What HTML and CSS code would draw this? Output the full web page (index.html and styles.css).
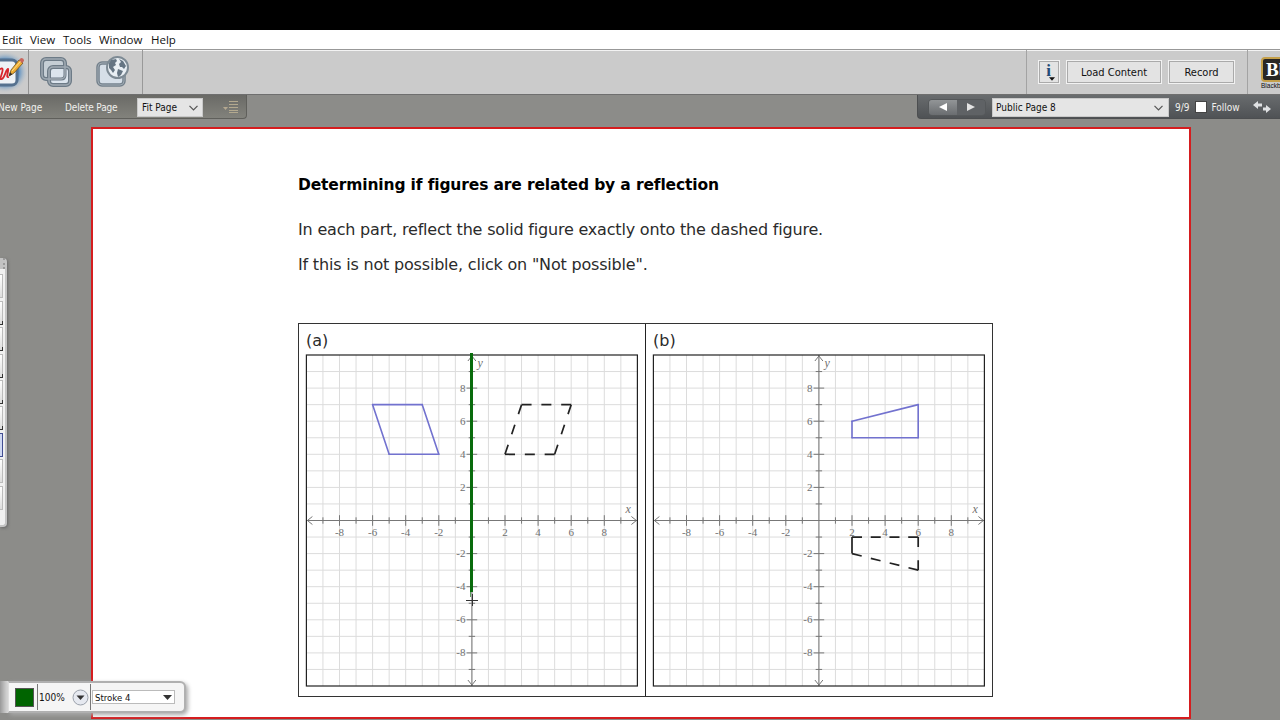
FILE: index.html
```
<!DOCTYPE html>
<html>
	<head>
		<meta charset="UTF-8">
		<title>Whiteboard</title>
		<link rel="stylesheet" href="styles.css">
	</head>
	<body>
		<div class="titlebar"></div>
		<ul class="menu">
			<li class="m1">Edit</li>
			<li class="m2">View</li>
			<li class="m3">Tools</li>
			<li class="m4">Window</li>
			<li>Help</li>
		</ul>
		<div class="toolbar">
			<div class="mode active">
				<svg width="29" height="44" viewBox="0 0 29 44">
					<defs>
						<radialGradient id="glow"><stop offset=".6" stop-color="#5b8fc0"/><stop offset="1" stop-color="#c6cacd" stop-opacity="0"/></radialGradient>
					</defs>
					<ellipse cx="5" cy="22" rx="23" ry="21" fill="url(#glow)"/>
					<rect x="-12" y="10" width="29" height="25" rx="5" fill="#eef2f6" stroke="#55718f" stroke-width="3"/>
					<path d="M-2 22 C1 17 4 17 2 23 C1 27 -1 30 2 29 C5 27 6 19 8 19 C9 22 5 28 9 27" fill="none" stroke="#d8262c" stroke-width="1.800"/>
					<path d="M9 26 L11 20 L19 10 L23 13 L14 23 Z" fill="#f0ae35" stroke="#6e5320" stroke-width=".8"/>
					<path d="M12 21 L21 11" stroke="#ffe08a" stroke-width="1"/>
					<path d="M9 26 L10 22 L12.500 24.500 Z" fill="#3b3022"/>
					<path d="M19 10 L21 8 Q24 8 24 11 L22 13 Z" fill="#c9655c"/>
				</svg>
			</div>
			<div class="modes">
				<svg width="34" height="34" viewBox="0 0 34 34">
					<g fill="none" stroke="#6d7b87" stroke-width="4">
						<rect x="3" y="4" width="23" height="20" rx="4" fill="#c5ced5"/>
						<rect x="10" y="12" width="21" height="18" rx="4" fill="#dce5ee"/>
						<path d="M26 12V20Q26 24 22 24H10" stroke-width="3"/>
					</g>
					<g fill="none" stroke="#a0abb4" stroke-width="1.500">
						<rect x="3" y="4" width="23" height="20" rx="4"/>
						<rect x="10" y="12" width="21" height="18" rx="4"/>
					</g>
				</svg>
				<svg width="34" height="34" viewBox="0 0 34 34">
					<rect x="3" y="8" width="26" height="22" rx="4" fill="#d6dfe8" stroke="#74818c" stroke-width="3.500"/>
					<rect x="3" y="8" width="26" height="22" rx="4" fill="none" stroke="#a0abb4" stroke-width="1"/>
					<circle cx="22.500" cy="12.500" r="10.500" fill="#e9eff4" stroke="#7d8a94" stroke-width="2"/>
					<path d="M14 8 L16 5 L21 4 L22 6 L20 8 L21 10 L18 12 L20 15 L18 18 L16 15 L14 13 Z M24 4 L28 6 L31 11 L29 14 L27 12 L25 12 L24 9 L26 7 Z M23 14 L28 16 L26 20 L23 22 L22 18 Z" fill="#657583"/>
				</svg>
			</div>
			<div class="actions">
				<button class="btn info">
					<span>i</span>
					<svg width="6" height="4" viewBox="0 0 7 4"><path d="M0 0H7L3.500 4Z" fill="#111"/></svg>
				</button>
				<button class="btn load">Load Content</button>
				<button class="btn record">Record</button>
			</div>
			<div class="brand">
				<div class="logo">Bb</div>
				<small>Blackboard</small>
			</div>
		</div>
		<div class="canvas">
			<div class="tabs">
				<div class="tab pages">
					<span class="new">New Page</span>
					<span class="del">Delete Page</span>
					<div class="select fit">Fit Page<svg width="9" height="6" viewBox="0 0 9 6"><path d="M.5 .8L4.500 5L8.500 .8" fill="none" stroke="#555" stroke-width="1.200"/></svg></div>
					<svg class="notes" width="16" height="12" viewBox="0 0 16 12"><path d="M0 6H5L2.500 9Z" fill="#b5a890"/><path d="M6 .5H15M6 3.500H15M6 6.500H15M6 9.500H15M6 11.500H15" stroke="#b3a98f" stroke-width="1.200"/></svg>
				</div>
				<div class="tab nav">
					<div class="arrows">
						<i class="prev"><svg width="8" height="8" viewBox="0 0 8 8"><path d="M8 0V8L0 4Z" fill="#fff"/></svg></i>
						<i class="next"><svg width="8" height="8" viewBox="0 0 8 8"><path d="M0 0V8L8 4Z" fill="#e4e4e4"/></svg></i>
					</div>
					<div class="select public">Public Page 8<svg width="9" height="6" viewBox="0 0 9 6"><path d="M.5 .8L4.500 5L8.500 .8" fill="none" stroke="#555" stroke-width="1.200"/></svg></div>
					<span class="count">9/9</span>
					<i class="check"></i>
					<span>Follow</span>
					<svg class="swap" width="18" height="12" viewBox="0 0 18 12"><path d="M0 4L5 0V2.500H9V5.500H5V8ZM18 8L13 4V6.500H10V9.500H13V12Z" fill="#dfe1e3"/></svg>
				</div>
			</div>
			<div class="sheet">
				<h1>Determining if figures are related by a reflection</h1>
				<p class="line1">In each part, reflect the solid figure exactly onto the dashed figure.</p>
				<p class="line2">If this is not possible, click on "Not possible".</p>
				<div class="parts">
					<div class="part">
						<h2>(a)</h2>
						<svg id="plotA" class="plot" width="334" height="336"></svg>
					</div>
					<div class="part">
						<h2>(b)</h2>
						<svg id="plotB" class="plot" width="334" height="336"></svg>
					</div>
				</div>
			</div>
		</div>

		<div class="tools">
			<div class="grip"></div>
			<i></i>
			<i class="more"></i>
			<i class="more"></i>
			<i class="more"></i>
			<i class="more"></i>
			<i class="more"></i>
			<i class="on"></i>
			<i></i>
			<i></i>
		</div>

		<div class="stroke">
			<div class="handle"></div>
			<div class="options">
				<div class="swatch"></div>
				<div class="opacity">100%
					<svg width="17" height="17" viewBox="0 0 17 17"><circle cx="8.500" cy="8.500" r="7.500" fill="#e6e9f0" stroke="#9aa0aa"/><path d="M4.500 6.500H12.500L8.500 11Z" fill="#333"/></svg>
				</div>
				<div class="width">Stroke 4
					<svg width="9" height="5" viewBox="0 0 9 5"><path d="M0 0H9L4.500 5Z" fill="#333"/></svg>
				</div>
			</div>
		</div>

		<script>
			var U = 16.55;
			var CX = 166.9, CY = 167.5;

			function px(x){ return CX + x*U; }
			function py(y){ return CY - y*U; }

			function line(x1,y1,x2,y2,cls){
				return '<line class="'+cls+'" x1="'+x1+'" y1="'+y1+'" x2="'+x2+'" y2="'+y2+'"/>';
			}
			function text(x,y,s,cls){
				return '<text class="'+cls+'" x="'+x+'" y="'+y+'">'+s+'</text>';
			}

			// sides are drawn one by one so that every corner starts on a dash
			function figure(pts,cls){
				var s = "";
				for(var i=0; i<pts.length; i++){
					var a = pts[i], b = pts[(i+1)%pts.length];
					var x1 = px(a[0]), y1 = py(a[1]), x2 = px(b[0]), y2 = py(b[1]);
					var len = Math.sqrt((x2-x1)*(x2-x1)+(y2-y1)*(y2-y1));
					var n = Math.max(1, Math.round((len-10)/19.500));
					var dash = "";
					if(cls == "dashed" && len > 20){
						dash = ' stroke-dasharray="10 '+((len-10)/n-10)+'"';
					}
					s += '<line class="'+cls+'" x1="'+x1+'" y1="'+y1+'" x2="'+x2+'" y2="'+y2+'"'+dash+'/>';
				}
				return s;
			}

			function plot(id,solid,dashed,extra){
				var s = "";
				for(var i=-9; i<=9; i++){
					s += line(px(i),py(10),px(i),py(-10),"grid");
					s += line(px(-10),py(i),px(10),py(i),"grid");
				}
				s += line(px(-10),CY,px(10),CY,"axis");
				s += line(CX,py(10),CX,py(-10),"axis");
				for(i=-9; i<=9; i++){
					if(i == 0) continue;
					var t = i%2 ? 3.200 : 5.300;
					s += line(px(i),CY-t,px(i),CY+t,"axis");
					s += line(CX-t,py(i),CX+t,py(i),"axis");
					if(i%2 == 0){
						s += text(px(i),CY+15,i,"num mid");
						s += text(CX-6.500,py(i)+3.500,i,"num end");
					}
				}
				s += '<path class="axis" d="M'+(px(-10)+6)+' '+(CY-4)+'L'+(px(-10)+1)+' '+CY+'l5 4M'+(px(10)-6)+' '+(CY-4)+'L'+(px(10)-1)+' '+CY+'l-5 4"/>';
				s += '<path class="axis" d="M'+(CX-4)+' '+(py(10)+6)+'L'+CX+' '+(py(10)+1)+'l4 5M'+(CX-4)+' '+(py(-10)-6)+'L'+CX+' '+(py(-10)-1)+'l4 -5"/>';
				s += text(px(10)-12,CY-8,"x","name");
				s += text(CX+5.500,py(10)+12,"y","name");
				s += '<rect class="frame" x="'+px(-10)+'" y="'+py(10)+'" width="'+20*U+'" height="'+20*U+'"/>';
				s += figure(solid,"solid") + figure(dashed,"dashed");
				document.getElementById(id).innerHTML = s + (extra || "");
			}

			var pen = line(166.500,0,166.500,239,"pen") + line(165.500,239,165.500,244,"tail") + line(161,247.500,173,247.500,"cross") + line(167.500,241,167.500,253,"cross");

			plot("plotA", [[-6,7],[-3,7],[-2,4],[-5,4]], [[3,7],[6,7],[5,4],[2,4]], pen);
			plot("plotB", [[2,6],[6,7],[6,5],[2,5]], [[2,-1],[6,-1],[6,-3],[2,-2]]);
		</script>
	</body>
</html>
```
FILE: styles.css
```
*{margin: 0;padding: 0;box-sizing: border-box;}
body{width: 1280px;height: 720px;overflow: hidden;position: relative;display: flex;flex-direction: column;font-family: "DejaVu Sans Condensed","DejaVu Sans",sans-serif;font-size: 11px;color: #111;background: #8c8c89;}
svg{display: block;flex: none;}
i{display: block;}

.titlebar{height: 30px;background: #000;}
.menu{height: 19px;list-style: none;display: flex;align-items: center;padding: 0 0 1px 2px;background: #fff;font: 11.500px "Open Sans",sans-serif;}
.m1{width: 28px;}
.m2{width: 33px;}
.m3{width: 36px;}
.m4{width: 52px;}

.toolbar{height: 46px;display: flex;background: #cbcbcb;border-top: 1px solid #989898;border-bottom: 1px solid #6f6f6f;box-shadow: inset 0 1px #f3f3f3;}
.mode{width: 29px;border-right: 1px solid #929292;overflow: hidden;}
.modes{width: 114px;display: flex;align-items: center;gap: 22px;padding-left: 10px;border-right: 1px solid #999;}
.actions{width: 222px;margin-left: auto;display: flex;align-items: center;gap: 8px;padding: 0 0 0 12px;border-left: 1px solid #a3a3a3;border-right: 1px solid #a3a3a3;}
.btn{height: 22px;border: 1px solid #aaa;background: #e3e3e3;box-shadow: 0 0 0 1px #f2f2f2;font-family: inherit;font-size: 11px;color: #111;white-space: nowrap;}
.info{width: 20px;display: flex;align-items: flex-end;justify-content: flex-end;padding: 0 3px 1px 0;}
.info span{font: bold 17px/20px "Liberation Serif",serif;color: #234c78;}
.info svg{margin-left: -2px;}
.load{width: 94px;}
.record{width: 65px;}
.brand{width: 32px;padding: 7px 0 0 13px;overflow: hidden;}
.logo{width: 44px;height: 25px;padding-left: 3px;border: 2px solid #c5a04a;border-radius: 4px;background: #292725;color: #fff;font: bold 19px/21px "Liberation Serif",serif;}
.brand small{display: block;font: 6.500px/8px "Liberation Sans",sans-serif;}

.canvas{flex: 1;min-height: 0;}
.tabs{height: 24px;display: flex;justify-content: space-between;}
.tab{height: 24px;display: flex;align-items: center;padding-top: 1px;color: #f1f1ee;font-size: 10px;white-space: nowrap;}
.pages{width: 247px;border-right: 1px solid #5f5f5b;border-bottom: 1px solid #5f5f5b;border-radius: 0 0 4px 0;background: linear-gradient(#6a6a66,#82827c);}
.new{width: 67px;margin-left: -2px;padding-top: 1px;}
.del{width: 72px;padding-top: 1px;letter-spacing: -.150px;}
.select{height: 19px;display: flex;align-items: center;justify-content: space-between;padding: 1px 4px 0;border: 1px solid #c9c9c9;background: #e5e5e5;color: #111;}
.fit{width: 66px;}
.notes{margin-left: 20px;}
.nav{width: 363px;padding-left: 10px;border-left: 1px solid #4c4e50;border-bottom: 1px solid #4c4e50;border-radius: 0 0 0 4px;background: linear-gradient(#696c6e,#4f5255);}
.nav span{padding-top: 1px;}
.arrows{width: 58px;height: 17px;display: flex;margin-right: 6px;border: 1px solid #55585a;border-radius: 4px;overflow: hidden;}
.arrows i{flex: 1;display: flex;align-items: center;justify-content: center;}
.prev{background: linear-gradient(#929597,#6a6d70);}
.next{background: #5f6265;}
.public{width: 177px;padding: 1px 5px 0 3px;}
.count{margin-left: 6px;}
.check{width: 12px;height: 12px;margin: 0 4px 0 6px;background: #fff;border: 1px solid #444;}
.swap{margin-left: 13px;}

.sheet{width: 1100px;height: 592px;margin: 8px 0 0 91px;padding: 46px 0 0 205px;border: 2px solid #d51d1f;background: #fff;}
.sheet h1,.sheet p,.sheet h2{font: 16px/20px "DejaVu Sans",sans-serif;color: #2b2b2b;white-space: nowrap;}
.sheet h1{font-size: 15.500px;font-weight: bold;color: #000;letter-spacing: -.140px;}
.sheet p{letter-spacing: -.190px;}
.sheet .line1{margin-top: 25px;}
.sheet .line2{margin-top: 15px;}
.parts{width: 695px;height: 374px;margin-top: 48px;display: flex;border: 1px solid #333;}
.part{width: 346px;padding: 7px 0 0 6px;}
.part:first-child{width: 347px;border-right: 1px solid #222;}
.sheet .part h2{height: 22px;padding-left: 1px;}
.plot{overflow: visible;}
.grid{stroke: #dcdcdc;stroke-width: 1;}
.axis{stroke: #777;stroke-width: 1;fill: none;}
.frame{fill: none;stroke: #222;stroke-width: 1.200;}
.solid{stroke: #7272cf;stroke-width: 1.600;stroke-linecap: round;}
.dashed{stroke: #222;stroke-width: 1.700;}
.num{font: 11px "Liberation Serif",serif;fill: #707070;}
.mid{text-anchor: middle;}
.end{text-anchor: end;}
.name{font: italic 12px "Liberation Serif",serif;fill: #707070;}
.pen{stroke: #086b0c;stroke-width: 3;}
.tail{stroke: #5a9a5c;stroke-width: 1;}
.cross{stroke: #333;stroke-width: 1;}

/* floating palettes */
.tools{position: absolute;left: 0;top: 258px;width: 7px;height: 269px;display: flex;flex-direction: column;gap: 2.400px;border-right: 2px solid #c4c4c4;border-bottom: 2px solid #c4c4c4;border-radius: 0 4px 4px 0;background: #f0f0f0;box-shadow: 1px 1px 3px #666;}
.grip{height: 11px;margin-bottom: 3px;background: #c2c2c2;border-right: 2px dotted #999;}
.tools i{width: 3px;height: 24px;border: 1px solid #bbb;border-left: 0;background: linear-gradient(#fff,#ddd);}
.tools .more{border-image: linear-gradient(#bbb 82%,#333 82%) 1;}
.tools .on{border-color: #424d91;background: #cfd8f2;}

.stroke{position: absolute;left: 0;top: 681px;width: 186px;height: 32px;display: flex;}
.handle{width: 8px;background: linear-gradient(90deg,#999,#ddd);}
.options{flex: 1;display: flex;align-items: center;padding-left: 6px;border: 2px solid #b0b0b0;border-left: 1px solid #ddd;border-radius: 0 6px 6px 0;background: #f5f5f5;box-shadow: 2px 2px 4px #aaa;}
.swatch{width: 19px;height: 19px;border: 1px solid #555;background: #006400;}
.opacity{width: 54px;height: 26px;margin-left: 3px;display: flex;align-items: center;justify-content: space-between;padding: 0 1px;border-left: 1px solid #777;border-right: 1px solid #777;font-size: 10px;}
.width{width: 83px;height: 14px;margin-left: 1px;display: flex;align-items: center;justify-content: space-between;padding: 0 2px;border: 1px solid #bbb;background: #fff;font-size: 9.500px;}
```
